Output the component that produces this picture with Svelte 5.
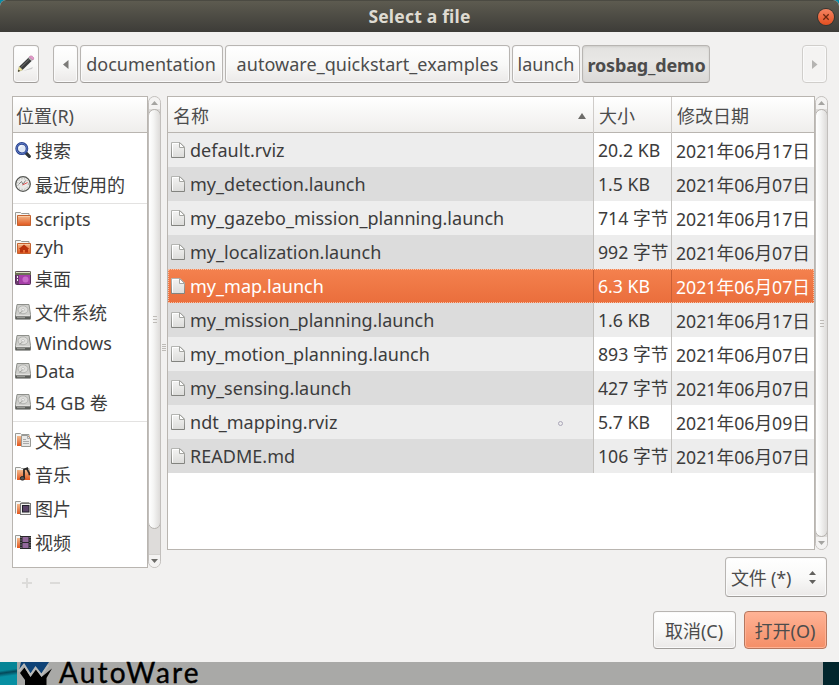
<script lang="ts">
	const crumbs = [
		{ name: 'documentation', cls: 'docs' },
		{ name: 'autoware_quickstart_examples', cls: 'examples' },
		{ name: 'launch', cls: 'launch' },
		{ name: 'rosbag_demo', cls: 'current' }
	];

	const places = [
		{ name: '搜索', icon: 'search', cjk: true },
		{ name: '最近使用的', icon: 'recent', cjk: true },
		{ separator: true },
		{ name: 'scripts', icon: 'folder' },
		{ name: 'zyh', icon: 'home' },
		{ name: '桌面', icon: 'desktop', cjk: true },
		{ name: '文件系统', icon: 'drive', cjk: true },
		{ name: 'Windows', icon: 'drive' },
		{ name: 'Data', icon: 'drive' },
		{ name: '54 GB 卷', icon: 'drive', cjk: true },
		{ separator: true },
		{ name: '文档', icon: 'documents', cjk: true },
		{ name: '音乐', icon: 'music', cjk: true },
		{ name: '图片', icon: 'pictures', cjk: true },
		{ name: '视频', icon: 'videos', cjk: true }
	];

	const files = [
		{ name: 'default.rviz', size: '20.2 KB', date: '2021年06月17日' },
		{ name: 'my_detection.launch', size: '1.5 KB', date: '2021年06月07日' },
		{ name: 'my_gazebo_mission_planning.launch', size: '714 字节', date: '2021年06月17日' },
		{ name: 'my_localization.launch', size: '992 字节', date: '2021年06月07日' },
		{ name: 'my_map.launch', size: '6.3 KB', date: '2021年06月07日' },
		{ name: 'my_mission_planning.launch', size: '1.6 KB', date: '2021年06月17日' },
		{ name: 'my_motion_planning.launch', size: '893 字节', date: '2021年06月07日' },
		{ name: 'my_sensing.launch', size: '427 字节', date: '2021年06月07日' },
		{ name: 'ndt_mapping.rviz', size: '5.7 KB', date: '2021年06月09日' },
		{ name: 'README.md', size: '106 字节', date: '2021年06月07日' }
	];

	let selected = $state('my_map.launch');
</script>

{#snippet placeIcon(icon: string)}
	<svg class="icon" width="16" height="16" viewBox="0 0 16 16" fill="none">
		{#if icon === 'search'}
			<path d="M11 11l3.3 3.3" stroke="#2e3436" stroke-width="3.2" stroke-linecap="round" />
			<circle cx="6.8" cy="6.6" r="5.2" fill="#dfe8f5" stroke="#27408b" stroke-width="2.6" />
			<circle cx="6.8" cy="6.6" r="5.2" stroke="#6c8bd6" stroke-width="0.8" />
			<path d="M4.2 6a3 3 0 0 1 3-2.4" stroke="#fff" />
		{:else if icon === 'recent'}
			<circle cx="8" cy="8" r="7.3" fill="#e9e9e7" stroke="#555753" stroke-width="1.3" />
			<circle cx="8" cy="8" r="5.4" stroke="#a5a6a2" stroke-dasharray="1 1.9" />
			<path d="M3.5 8.5l3-3L8 8.5l2.5-4" stroke="#777" stroke-width=".9" />
			<path d="M7.5 9l5-2.5" stroke="#e05050" />
		{:else if icon === 'drive'}
			<path d="M2 .5h12l1.5 10v4.2H.5v-4.2z" fill="#cfcfcc" stroke="#8e908b" />
			<path d="M.5 12h15v3.5H.5z" fill="#5d5f5b" />
			<path d="M1 11.8h14" stroke="#e8e8e6" />
			<path d="M2 13.7h8" stroke="#a5a5a2" />
			<ellipse cx="8" cy="5.8" rx="5" ry="4" fill="#dededb" stroke="#b1b2af" />
			<ellipse cx="8" cy="5.8" rx="1.6" ry="1.2" fill="#f6f6f5" stroke="#a9aaa7" stroke-width=".6" />
			<path d="M7.5 7L4.5 9.5" stroke="#999b96" />
		{:else if icon === 'desktop'}
			<rect x=".5" y="1.5" width="15" height="13" rx="1" fill="#a63fa8" stroke="#57305a" />
			<path d="M0 1.5h16v3.5H0z" fill="#6b7054" />
			<path d="M1 2.5h14" stroke="#d9dfc2" />
			<path d="M1 5h3v9H1z" fill="#6d3c70" />
			<path d="M2.5 6v6" stroke="#eee" stroke-dasharray="2 1" />
			<circle cx="10.5" cy="9.5" r="3" fill="#c96bc9" />
		{:else}
			<path d="M.5 13.5V1.5h5l1 1h7.5v3" fill="#f6f6f4" stroke="#999a96" />
			{#if icon === 'folder' || icon === 'home'}
				<path d="M2.5 4.5h13v10h-13z" fill="url(#folder-fill)" stroke="#c4622f" />
				<path d="M3 5.5h12" stroke="#f7c9a3" />
				{#if icon === 'home'}
					<path d="M9 5.5L3.8 10H5v3.5h3V11h2v2.5h3V10h1.3z" fill="#b9330d" />
				{/if}
			{:else}
				<path d="M2 4h13v10H2z" fill="url(#folder-fill)" />
				{#if icon === 'documents'}
					<path d="M6.5 3.5h6l3 3v8h-9z" fill="#e8e8e6" stroke="#999a96" />
					<path d="M12.5 3.5v3h3M8 7.5h3M8 9.5h6M8 11.5h6" stroke="#aaa" />
				{:else if icon === 'music'}
					<path d="M9 12V3.5l3-1.2c0 3 2.8 3 2.5 7" stroke="#252525" stroke-width="1.8" />
					<ellipse cx="7.5" cy="12.3" rx="2.2" ry="1.8" fill="#555" stroke="#222" />
				{:else if icon === 'pictures'}
					<rect x="5.5" y="3.5" width="10" height="11" fill="#f2f2f0" stroke="#777" />
					<rect x="7.5" y="5.5" width="6.5" height="6.5" fill="#5b4468" stroke="#20202a" />
				{:else}
					<rect x="5" y="2" width="11" height="13" fill="#29292b" />
					<path d="M7.5 3h6v5h-6zM7.5 9h6v5h-6z" fill="#92699b" />
					<path d="M6 3v12M15 3v12" stroke="#bbb" stroke-width=".8" stroke-dasharray="1 1.5" />
				{/if}
			{/if}
		{/if}
	</svg>
{/snippet}

{#snippet scrollbar(cls: string)}
	<div class={`scrollbar ${cls}`}>
		<span class="stepper"><svg width="7" height="4"><path d="M0 4l3.5-4L7 4z" fill="#a5a4a1" /></svg></span>
		<div class="thumb"><i></i><i></i><i></i></div>
		<span class="stepper stepper__down"><svg width="7" height="4"><path d="M0 0h7L3.5 4z" fill="currentColor" /></svg></span>
	</div>
{/snippet}

<svg class="defs" width="0" height="0">
	<defs>
		<linearGradient id="folder-fill" x1="0" y1="0" x2="0" y2="1">
			<stop offset="0" stop-color="#f3b98c" />
			<stop offset="1" stop-color="#e2571e" />
		</linearGradient>
		<linearGradient id="page-fill" x1="0" y1="0" x2="0" y2="1">
			<stop offset="0" stop-color="#f4f4f3" />
			<stop offset="1" stop-color="#dcdcda" />
		</linearGradient>
		<linearGradient id="page-edge" x1="0" y1="0" x2="0" y2="1">
			<stop offset="0" stop-color="#b4b5b2" />
			<stop offset="1" stop-color="#82837f" />
		</linearGradient>
	</defs>
</svg>

<div class="screen">
	<div class="dialog">
		<header class="titlebar">
			<span class="title">Select a file</span>
			<button class="close" aria-label="close">
				<svg width="16" height="16" viewBox="0 0 16 16"><path d="M5.3 5.3l5.4 5.4M10.7 5.3l-5.4 5.4" stroke="#6b2810" stroke-width="1.3" /></svg>
			</button>
		</header>

		<nav class="pathbar">
			<button class="btn pencil" aria-label="edit path">
				<svg width="18" height="18" viewBox="0 0 18 18">
					<path d="M6 16l10-4-1 2-9 2z" fill="#ccc" />
					<path d="M1 16.5l1.3-5L5.6 15z" fill="#eee59a" stroke="#aaa266" stroke-width=".5" />
					<path d="M1 16.7l.6-2 1.5 1.4z" fill="#111" />
					<path d="M2.4 11.4l9.3-9 3.4 3.2-9.4 9.2z" fill="#393b3b" />
					<path d="M4 12.3l8.8-8.6" stroke="#777" />
					<path d="M11.2 2.9l1.2-1.2 3.4 3.3-1.2 1.2z" fill="#bbb" />
					<path d="M12.2 1.9c2-2.6 6 .6 3.8 3.1z" fill="#e59acb" stroke="#b86b9e" stroke-width=".6" />
				</svg>
			</button>
			<button class="btn arrow" aria-label="back">
				<svg width="6" height="9"><path d="M5.5 0v9L0 4.5z" fill="#7c7b78" /></svg>
			</button>
			{#each crumbs as crumb}
				<button class={`btn crumb ${crumb.cls}`}>{crumb.name}</button>
			{/each}
			<button class="btn arrow arrow__next" aria-label="forward">
				<svg width="6" height="9"><path d="M0 0v9l5.5-4.5z" fill="#b5b4b2" /></svg>
			</button>
		</nav>

		<main class="panes">
			<section class="sidebar">
				<div class="sidebar--row">
					<div class="places">
						<div class="head"><span>位置(R)</span></div>
						{#each places as place}
							{#if place.separator}
								<div class="separator"></div>
							{:else}
								<div class={`place ${place.cjk ? 'place__tall' : ''}`}>
									{@render placeIcon(place.icon ?? '')}
									<span>{place.name}</span>
								</div>
							{/if}
						{/each}
					</div>
					{@render scrollbar('side')}
				</div>
				<div class="tools">
					<svg width="40" height="11" stroke="#dcdbd9" stroke-width="2"><path d="M0 5h10M5 0v10M28 5h10" /></svg>
				</div>
			</section>

			<div class="handle"><i></i><i></i><i></i><i></i></div>

			<section class="listing">
				<div class="files">
					<div class="head columns">
						<span>名称 <svg width="8" height="6"><path d="M0 6l4-6 4 6z" fill="#6d6c69" /></svg></span>
						<span>大小</span>
						<span>修改日期</span>
					</div>
					{#each files as file}
						<!-- svelte-ignore a11y_click_events_have_key_events, a11y_no_static_element_interactions -->
						<div class={`file columns ${file.name === selected ? 'file__selected' : ''}`} onclick={() => (selected = file.name)}>
							<div class="name">
								<svg width="14" height="16" viewBox="0 0 14 16">
									<path d="M.5.5h8.5l4.5 4.5v10.5H.5z" fill="url(#page-fill)" stroke="url(#page-edge)" />
									<path d="M1.5 14.5v-13h7" stroke="#fff" fill="none" />
									<path d="M8.5.5v5h5z" fill="#fff" stroke="#a5a6a2" />
								</svg>
								<span>{file.name}</span>
								{#if file.name === 'ndt_mapping.rviz'}<b class="ring"></b>{/if}
							</div>
							<div class="size">{file.size}</div>
							<div class="date">{file.date}</div>
						</div>
					{/each}
				</div>
				{@render scrollbar('main')}
			</section>
		</main>

		<footer>
			<button class="btn filter">
				<span>文件 (*)</span>
				<svg width="7" height="13" fill="#62615e"><path d="M0 4l3.5-4L7 4zM0 9h7l-3.5 4z" /></svg>
			</button>
			<div class="actions">
				<button class="btn">取消(C)</button>
				<button class="btn open">打开(O)</button>
			</div>
		</footer>
	</div>

	<div class="desktop">
		<div class="water"></div>
		<div class="brand">
			<svg class="mark" width="36" height="23" viewBox="0 0 36 23">
				<path d="M4 0h28l-8 12-5.5-7-5 7L7 4 2 9z" fill="#0f4377" />
				<path d="M3 11l4.5-5.5 6 9.5L19 7.5l5.5 7.5L35 6.5 29.5 16v7H8v-5z" fill="#000" />
				<path d="M1.5 9.5L7 2.7 13.5 13l5-7.5 6 7.7L31.5 3" fill="none" stroke="#b9bab9" stroke-width="1.9" />
			</svg>
			<span class="wordmark">AutoWare</span>
		</div>
	</div>
</div>

<style>
	:global(body) {
		font-family: 'Noto Sans', 'Noto Sans CJK SC', sans-serif;
		background: #078aa5;
		overflow: hidden;
	}
	.defs {
		position: absolute;
	}
	.screen {
		width: 839px;
		height: 685px;
		font-size: 18px;
		color: #4c4c4c;
		overflow: hidden;
	}
	.dialog {
		height: 662px;
		display: flex;
		flex-direction: column;
		background: #f2f1f0;
		border-radius: 6px 6px 0 0;
		overflow: hidden;
	}
	.titlebar {
		height: 32px;
		flex: none;
		box-sizing: border-box;
		display: grid;
		grid-template-columns: 1fr auto 1fr;
		align-items: center;
		border-top: 1px solid #4b4a42;
		background: linear-gradient(#5d5b50, #3d3c38);
		color: #dfdbd2;
	}
	.title {
		grid-column: 2;
		padding-bottom: 2px;
		font-weight: 700;
		font-size: 17.5px;
		letter-spacing: 0.2px;
	}
	.close {
		justify-self: end;
		width: 16px;
		height: 16px;
		margin-right: 5px;
		padding: 0;
		border: 0;
		border-radius: 50%;
		background: linear-gradient(#f58462, #e34f20);
		box-shadow: 0 0 0 1px #38342e;
	}
	.close svg {
		display: block;
	}
	.btn {
		box-sizing: border-box;
		height: 38px;
		padding: 0;
		border: 1px solid #b8b5b2;
		border-bottom-color: #a09d9a;
		border-radius: 4px;
		background: linear-gradient(#fff, #f9f9f8 50%, #ebe9e8);
		box-shadow: inset 0 0 0 1px #fafafa;
		font: inherit;
		color: #4c4c4c;
		display: flex;
		align-items: center;
		justify-content: center;
		white-space: nowrap;
	}
	.pathbar {
		display: flex;
		gap: 2px;
		padding: 13px 12px 13px 13px;
	}
	.pencil {
		width: 26px;
		margin-right: 12px;
	}
	.arrow {
		width: 25px;
	}
	.arrow__next {
		margin-left: auto;
		border-color: #d0cecb;
		background: #f4f3f2;
	}
	.docs {
		width: 143px;
		padding-right: 1px;
	}
	.examples {
		width: 285px;
		letter-spacing: 0.04px;
	}
	.launch {
		width: 68px;
	}
	.current {
		width: 128px;
		padding: 2px 0 0 1px;
		font-weight: 700;
		letter-spacing: -0.15px;
		background: linear-gradient(#e3e2e0, #e8e7e5 40%, #dad8d6);
		box-shadow: inset 0 1px 2px #cfcdca;
	}
	.panes {
		display: flex;
		align-items: flex-start;
		padding-left: 12px;
		height: 461px;
	}
	.sidebar {
		width: 149px;
	}
	.sidebar--row,
	.listing {
		display: flex;
	}
	.places {
		box-sizing: border-box;
		width: 136px;
		height: 472px;
		border: 1px solid #b9b5b0;
		background: #fff;
	}
	.head {
		box-sizing: border-box;
		height: 36px;
		border-bottom: 1px solid #b9b5b0;
		background: linear-gradient(#fff, #efeeec);
		line-height: 38px;
	}
	.places .head {
		padding-left: 3px;
	}
	.place {
		height: 28px;
		display: flex;
		align-items: center;
		gap: 4px;
		padding-left: 2px;
		line-height: 28px;
		white-space: nowrap;
		color: #3c3c3c;
	}
	.place__tall {
		height: 34px;
	}
	.place__tall span {
		padding-top: 1px;
	}
	.separator {
		height: 4px;
		background: linear-gradient(#e3e2e1, #e3e2e1) 0 2px / 100% 1px no-repeat;
	}
	.tools {
		padding: 10px 0 0 10px;
		line-height: 0;
	}
	.scrollbar {
		box-sizing: border-box;
		width: 13px;
		display: flex;
		flex-direction: column;
		border: 1px solid #c2bfbc;
		border-radius: 7px;
		background: #dedcda;
		overflow: hidden;
	}
	.side {
		height: 472px;
		color: #6c6b68;
	}
	.main {
		height: 454px;
		color: #a5a4a1;
	}
	.stepper {
		height: 12px;
		flex: none;
		display: flex;
		align-items: center;
		justify-content: center;
		background: #f4f3f2;
	}
	.thumb {
		box-sizing: border-box;
		margin: 0 -1px;
		border: 1px solid #b5b2ae;
		border-radius: 7px;
		background: linear-gradient(90deg, #fff, #f5f5f4 40%, #dddbd9);
		display: flex;
		flex-direction: column;
		align-items: center;
		justify-content: center;
		gap: 2px;
	}
	.side .thumb {
		height: 420px;
		margin-bottom: auto;
	}
	.main .thumb {
		flex: 1;
	}
	i {
		width: 4px;
		height: 1px;
		background: #bebbb7;
	}
	.stepper__down {
		border-top: 1px solid #d3d1ce;
	}
	.main .stepper__down {
		border-top: 0;
	}
	.handle {
		width: 6px;
		margin-top: 248px;
		display: flex;
		flex-direction: column;
		align-items: center;
		gap: 1px;
	}
	.files {
		box-sizing: border-box;
		width: 648px;
		height: 454px;
		border: 1px solid #b9b5b0;
		background: #fff;
	}
	.columns {
		display: grid;
		grid-template-columns: 426px 78px 142px;
	}
	.head.columns span {
		padding-left: 5px;
		box-shadow: inset -1px 0 #cfccc9;
	}
	.head.columns span:first-child {
		display: flex;
		justify-content: space-between;
		align-items: center;
		padding-right: 8px;
	}
	.head.columns span:last-child {
		box-shadow: none;
	}
	.file {
		box-sizing: border-box;
		height: 34px;
		line-height: 34px;
		color: #3c3c3c;
		white-space: nowrap;
	}
	.name {
		display: flex;
		align-items: center;
		gap: 5px;
		padding-left: 3px;
		border-right: 1px solid #c3c1be;
		background: #ededed;
		letter-spacing: 0.02px;
	}
	.size {
		padding-left: 4px;
		border-right: 1px solid #c3c1be;
		font-size: 17.7px;
	}
	.date {
		padding-left: 4px;
		line-height: 37px;
		font-size: 17.7px;
		height: 34px;
	}
	.file:nth-child(odd) {
		background: #ededed;
	}
	.file:nth-child(odd) .name {
		background: #dcdcdc;
	}
	.file.file__selected {
		position: relative;
		color: #fff;
		background: linear-gradient(#f4814e, #ea6e3c);
	}
	.file.file__selected::after {
		content: '';
		position: absolute;
		inset: 0;
		border: 1px dotted #f8c1a5;
	}
	.file.file__selected .name {
		background: none;
	}
	.file__selected .name,
	.file__selected .size {
		border-color: #c95f35;
	}
	.ring {
		box-sizing: border-box;
		width: 5px;
		height: 5px;
		border: 1px solid #aaa6b8;
		border-radius: 50%;
		margin: 2px 30px 0 auto;
	}
	footer {
		display: flex;
		flex-direction: column;
		align-items: flex-end;
		gap: 14px;
		padding-right: 12px;
	}
	.filter {
		width: 102px;
		height: 40px;
		justify-content: space-between;
		padding: 0 10px 0 5px;
		letter-spacing: -0.2px;
	}
	.actions {
		display: flex;
		gap: 8px;
	}
	.actions .btn {
		width: 83px;
		padding-right: 1px;
	}
	.actions .open {
		border-color: #b5775f;
		background: linear-gradient(#ffb396, #f48e67);
		box-shadow: inset 0 0 0 1px #ffb294;
	}
	.desktop {
		height: 23px;
		display: flex;
		background: #02262d;
	}
	.water {
		width: 17px;
		background: linear-gradient(172deg, #068596 35%, #04485a 45%, #078fa2 60%);
	}
	.brand {
		width: 806px;
		display: flex;
		gap: 6px;
		background: #a9a9a7;
	}
	.wordmark {
		font: 400 28px/20px Lato, sans-serif;
		letter-spacing: 2.2px;
		color: #000;
		-webkit-text-stroke: 0.4px #000;
	}
</style>
